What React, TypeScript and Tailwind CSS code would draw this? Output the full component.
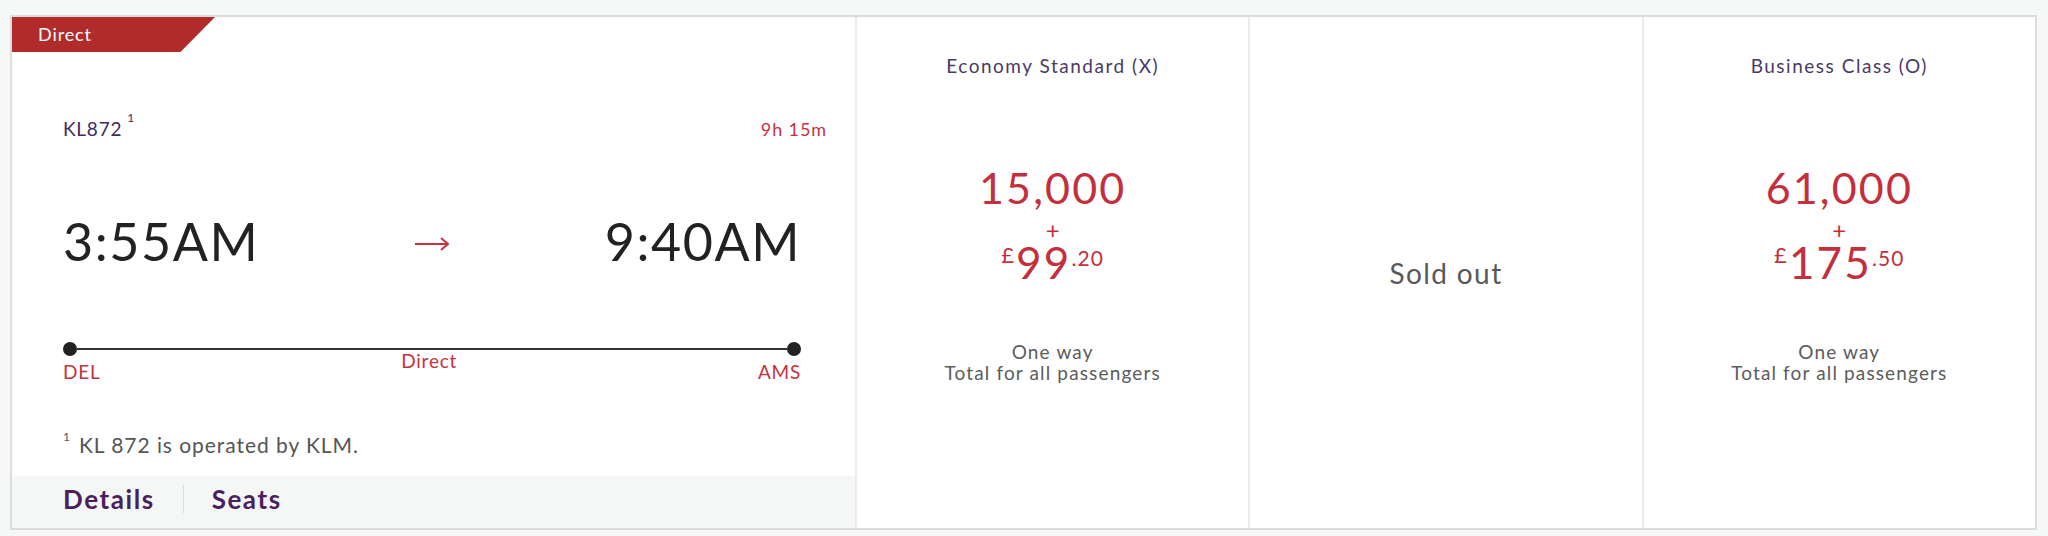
import React from 'react';

const font = { fontFamily: 'Lato, "Noto Sans", sans-serif' };

type Fare = {
    cabin: string;
    miles?: string;
    pounds?: string;
    pence?: string;
};

const fares: Fare[] = [
    {cabin: 'Economy Standard (X)', miles: '15,000', pounds: '99', pence: '.20'},
    {cabin: 'Sold out'},
    {cabin: 'Business Class (O)', miles: '61,000', pounds: '175', pence: '.50'},
];

const Arrow = () => (
    <svg width="36" height="16" viewBox="0 0 36 16" fill="none" className="mt-[6px]">
        <line x1="1" y1="8" x2="34" y2="8" stroke="#c5323e" strokeWidth="2" />
        <polyline points="27,2 34,8 27,14" stroke="#c5323e" strokeWidth="2" fill="none" />
    </svg>
);

const FareColumn = ({fare}: { fare: Fare }) => {
    if (!fare.miles) {
        return (
            <div className="flex-1 border-l-2 border-[#ebebeb] flex items-center justify-center">
                <span className="text-[28px] tracking-[0.05em] text-[#595959]">{fare.cabin}</span>
            </div>
        );
    }

    return (
        <div className="flex-1 border-l-2 border-[#ebebeb] flex flex-col items-center pt-[37px]">
            <div className="text-[19px] leading-[24px] tracking-[0.08em] text-[#4a3a63]">{fare.cabin}</div>
            <div className="mt-[88px] text-[43px] leading-[44px] tracking-[0.05em] text-[#c42f3d]">{fare.miles}</div>
            <div className="mt-[12px] text-[24px] leading-[16px] text-[#c42f3d]">+</div>
            <div className="mt-[2px] flex items-start text-[#c42f3d]">
                <span className="mt-[4px] mr-[2px] text-[22px] leading-none">£</span>
                <span className="text-[44px] leading-none tracking-[0.05em]">{fare.pounds}</span>
                <span className="mt-[7px] text-[21px] leading-none tracking-[0.05em]">{fare.pence}</span>
            </div>
            <div className="mt-[57px] text-[19px] leading-[21px] tracking-[0.06em] text-[#5c5c5c] text-center">
                <div>One way</div>
                <div>Total for all passengers</div>
            </div>
        </div>
    );
};

export default function App() {
    return (
        <div style={font} className="min-h-[536px] bg-[#f6f8f8] pt-[15px] pl-[10px] pr-[11px]">
            <div className="flex h-[515px] border-2 border-[#dcdcdc] bg-white">
                {/* flight summary */}
                <div className="w-[843px] shrink-0 flex flex-col">
                    <div className="h-[35px] w-[203px] bg-[#b22b2b] [clip-path:polygon(0_0,100%_0,83%_100%,0_100%)] flex items-center pl-[26px]">
                        <span className="text-[18px] tracking-[0.05em] text-white">Direct</span>
                    </div>

                    <div className="pl-[51px] pr-[54px]">
                        <div className="mt-[65px] flex justify-between items-start leading-[24px]">
                            <span className="text-[19px] tracking-[0.04em] text-[#3f2b5c]">
                                KL872<sup className="ml-[5px] text-[12px] align-top relative top-[1px]">1</sup>
                            </span>
                            <span className="mr-[-26px] text-[18px] tracking-[0.05em] text-[#c5323e]">9h 15m</span>
                        </div>

                        <div className="mt-[74px] flex justify-between items-center text-[52px] leading-[52px] tracking-[0.03em] text-[#222]">
                            <span>3:55AM</span>
                            <Arrow />
                            <span>9:40AM</span>
                        </div>

                        <div className="mt-[75px] flex items-center h-[14px]">
                            <div className="w-[14px] h-[14px] rounded-full bg-[#222]" />
                            <div className="flex-1 h-[2px] bg-[#333]" />
                            <div className="w-[14px] h-[14px] rounded-full bg-[#222]" />
                        </div>
                        <div className="flex justify-between items-start text-[19px] leading-[24px] tracking-[0.04em] text-[#c5323e]">
                            <span className="mt-[4px]">DEL</span>
                            <span className="mt-[-7px]">Direct</span>
                            <span className="mt-[4px]">AMS</span>
                        </div>

                        <div className="mt-[48px] text-[21px] leading-[26px] tracking-[0.045em] text-[#555]">
                            <sup className="text-[12px] align-top relative top-[5px] mr-[8px]">1</sup>
                            KL 872 is operated by KLM.
                        </div>
                    </div>

                    <div className="mt-auto h-[52px] bg-[#f5f7f7] flex items-center pl-[51px] pb-[6px] text-[26px] font-bold tracking-[0.06em] text-[#4b1f5e]">
                        <span>Details</span>
                        <div className="mx-[28px] w-px h-[28px] bg-[#dcdcdc]" />
                        <span>Seats</span>
                    </div>
                </div>

                {fares.map((fare) => (
                    <FareColumn key={fare.cabin} fare={fare} />
                ))}
            </div>
        </div>
    );
}
